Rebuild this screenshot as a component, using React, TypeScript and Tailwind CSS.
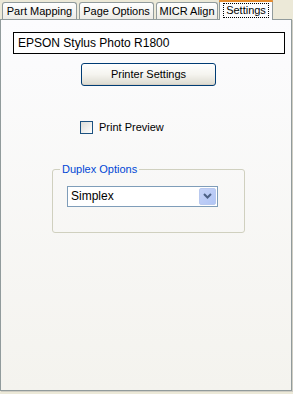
import React from "react";

const font = { fontFamily: '"Liberation Sans", Arial, sans-serif' };

function Tab({ label, width, active }: { label: string; width: string; active?: boolean }) {
  if (active) {
    return (
      <div
        className={`relative z-10 -mb-px flex h-[21px] ${width} flex-col rounded-t-[3px] border border-b-0 border-[#919b9c] bg-[#fcfcfe]`}
      >
        <div className="-mx-px -mt-px h-[3px] rounded-t-[3px] bg-[#e68b2c]" />
        <div className="flex flex-1 items-start justify-center pt-[1px]">
          <span className="border border-dotted border-black px-[2px] leading-[13px] text-black">
            {label}
          </span>
        </div>
      </div>
    );
  }
  return (
    <div
      className={`flex h-[17px] ${width} items-center justify-center rounded-t-[3px] border border-b-0 border-[#919b9c] bg-gradient-to-b from-white to-[#ecebe6] text-black`}
    >
      {label}
    </div>
  );
}

export default function App() {
  return (
    <div className="h-[394px] w-[293px] bg-[#ece9d8] text-[11px]" style={font}>
      {/* Tabs */}
      <div className="flex h-[19px] items-end gap-[2px] pl-[2px]">
        <Tab label="Part Mapping" width="w-[75px]" />
        <Tab label="Page Options" width="w-[75px]" />
        <Tab label="MICR Align" width="w-[62px]" />
        <div className="-ml-[1px]">
          <Tab label="Settings" width="w-[54px]" active />
        </div>
      </div>

      {/* Panel */}
      <div className="flex h-[372px] w-[292px] flex-col border border-[#919b9c] bg-gradient-to-b from-[#fcfcfe] to-[#f4f3ee] shadow-[1px_1px_0_#d0cec4]">
        {/* Printer name */}
        <div className="ml-[12px] mt-[12px] flex h-[22px] w-[272px] items-center border border-black bg-white pl-[4px] text-[12px] text-black">
          EPSON Stylus Photo R1800
        </div>

        {/* Printer settings button */}
        <button
          type="button"
          className="ml-[80px] mt-[9px] flex h-[23px] w-[135px] items-center justify-center rounded-[3px] border border-[#003c74] bg-gradient-to-b from-white via-[#f5f4ef] to-[#dcdad0] text-black shadow-[inset_0_-1px_0_#d6d0c5]"
        >
          Printer Settings
        </button>

        {/* Print preview */}
        <label className="ml-[79px] mt-[33px] flex items-center gap-[6px] text-black">
          <span className="h-[13px] w-[13px] border border-[#1c5180] bg-gradient-to-br from-[#dcdcd7] to-white" />
          Print Preview
        </label>

        {/* Duplex group */}
        <div className="relative ml-[51px] mt-[33px] h-[64px] w-[193px] rounded-[3px] border border-[#d0d0bf]">
          <span className="absolute -top-[8px] left-[7px] bg-[#f8f8f5] px-[2px] leading-[14px] text-[#0046d5]">
            Duplex Options
          </span>
          <div className="ml-[14px] mt-[16px] flex h-[21px] w-[151px] items-center border border-[#7f9db9] bg-white p-[1px]">
            <span className="flex-1 pl-[2px] text-[12px] text-black">Simplex</span>
            <span className="flex h-[17px] w-[17px] items-center justify-center rounded-[2px] border border-[#b9c9ef] bg-gradient-to-br from-[#c6d3f7] to-[#b1c5f5]">
              <svg width="9" height="6" viewBox="0 0 9 6">
                <path d="M1 1 L4.5 4.5 L8 1" fill="none" stroke="#4d6185" strokeWidth="2" />
              </svg>
            </span>
          </div>
        </div>
      </div>
    </div>
  );
}
